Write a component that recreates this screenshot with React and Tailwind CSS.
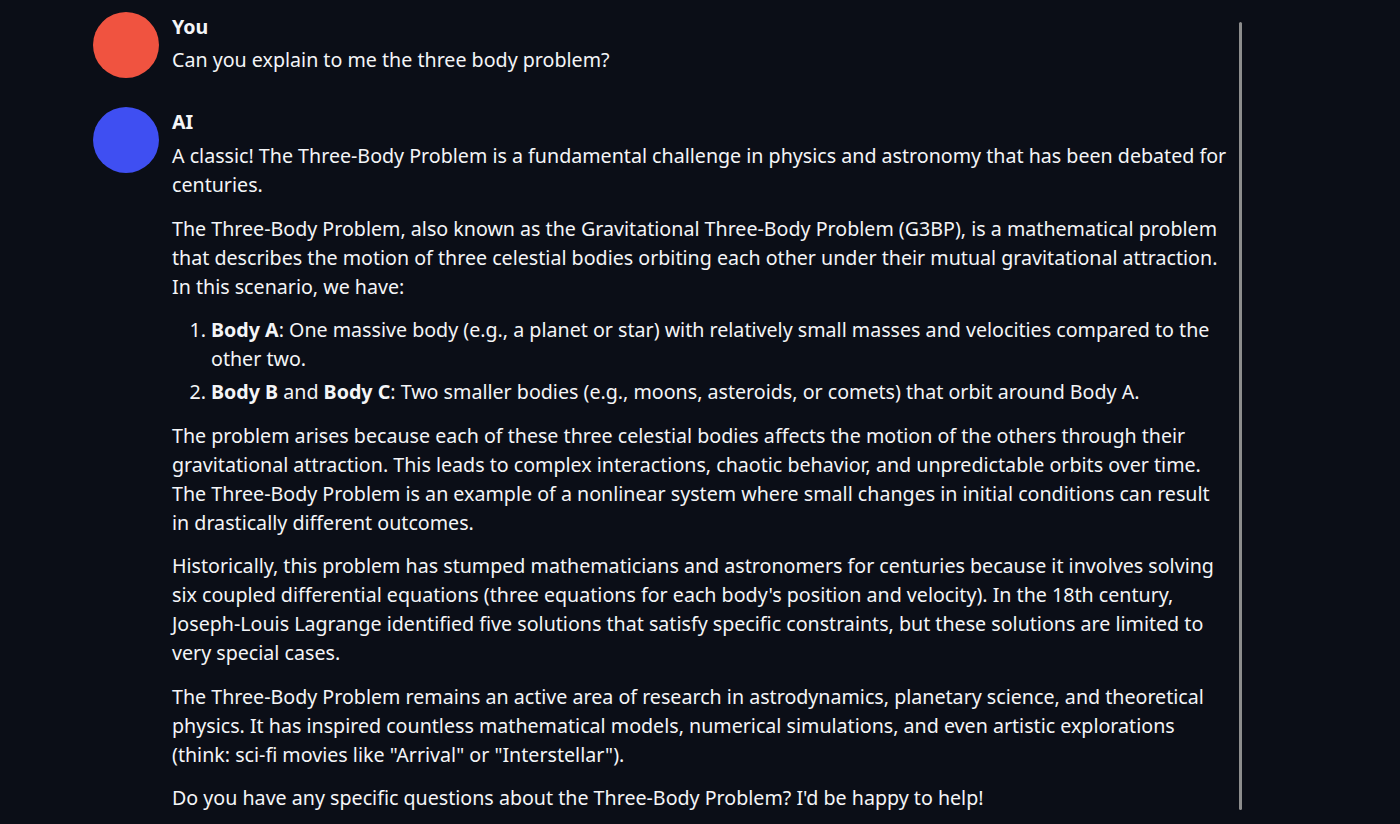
import React from 'react';

const messages = [
  {
    id: 1,
    author: 'You',
    color: 'bg-[#f05340]',
  },
  {
    id: 2,
    author: 'AI',
    color: 'bg-[#3f4ff2]',
  },
];

const Avatar = ({ color }) => (
  <div className={`w-[66px] h-[66px] rounded-full shrink-0 ${color}`} />
);

const App = () => {
  return (
    <div
      className="relative min-h-screen h-[824px] overflow-hidden bg-[#0b0e17] text-[#f4f5f7]"
      style={{ fontFamily: '"Noto Sans", sans-serif' }}
    >
      {/* scrollbar thumb */}
      <div className="absolute left-[1239px] top-[22px] w-[3px] h-[788px] rounded-full bg-[#8d8d8d]" />

      <div className="pl-[93px] pt-[12px] w-[1229px] text-[19.65px] leading-[29px]">
        {/* user message */}
        <div className="flex gap-[13px]">
          <Avatar color={messages[0].color} />
          <div className="flex-1">
            <div className="font-bold">{messages[0].author}</div>
            <p className="mt-[4px]">Can you explain to me the three body problem?</p>
          </div>
        </div>

        {/* assistant message */}
        <div className="flex gap-[13px] mt-[29px]">
          <Avatar color={messages[1].color} />
          <div className="flex-1">
            <div className="font-bold">{messages[1].author}</div>
            <div className="mt-[5px] space-y-[14.5px]">
              <p>
                A classic! The Three-Body Problem is a fundamental challenge in physics and astronomy that has been
                debated for centuries.
              </p>
              <p>
                The Three-Body Problem, also known as the Gravitational Three-Body Problem (G3BP), is a mathematical
                problem that describes the motion of three celestial bodies orbiting each other under their mutual
                gravitational attraction. In this scenario, we have:
              </p>
              <ol className="list-decimal pl-[39px] space-y-[4px]">
                <li>
                  <b>Body A</b>: One massive body (e.g., a planet or star) with relatively small masses and velocities
                  compared to the other two.
                </li>
                <li>
                  <b>Body B</b> and <b>Body C</b>: Two smaller bodies (e.g., moons, asteroids, or comets) that orbit
                  around Body A.
                </li>
              </ol>
              <p>
                The problem arises because each of these three celestial bodies affects the motion of the others
                through their gravitational attraction. This leads to complex interactions, chaotic behavior, and
                unpredictable orbits over time. The Three-Body Problem is an example of a nonlinear system where small
                changes in initial conditions can result in drastically different outcomes.
              </p>
              <p>
                Historically, this problem has stumped mathematicians and astronomers for centuries because it involves
                solving six coupled differential equations (three equations for each body's position and velocity). In
                the 18th century, Joseph-Louis Lagrange identified five solutions that satisfy specific constraints, but
                these solutions are limited to very special cases.
              </p>
              <p>
                The Three-Body Problem remains an active area of research in astrodynamics, planetary science, and
                theoretical physics. It has inspired countless mathematical models, numerical simulations, and even
                artistic explorations (think: sci-fi movies like "Arrival" or "Interstellar").
              </p>
              <p>Do you have any specific questions about the Three-Body Problem? I'd be happy to help!</p>
            </div>
          </div>
        </div>
      </div>
    </div>
  );
};

export default App;
